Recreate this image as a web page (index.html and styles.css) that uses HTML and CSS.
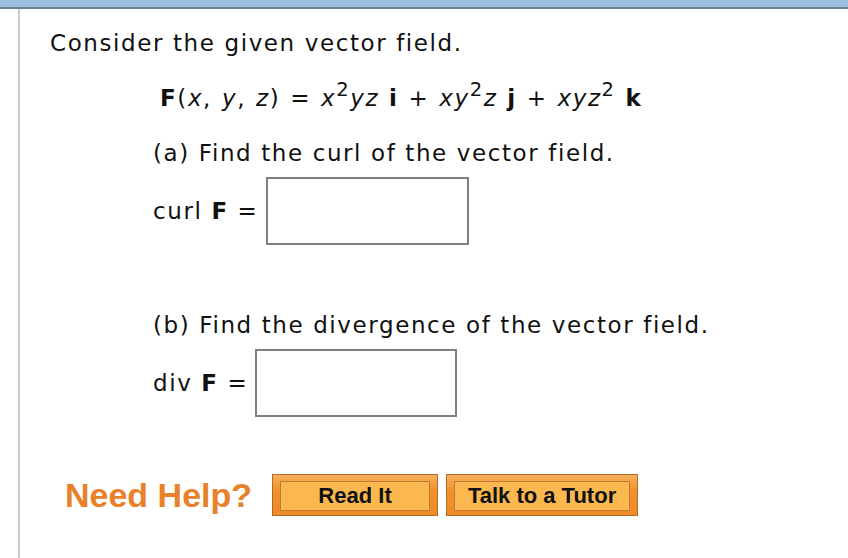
FILE: index.html
```html
<!DOCTYPE html>
<html lang="en">
<head>
  <meta charset="UTF-8">
  <title>Vector Field</title>
  <link rel="stylesheet" href="styles.css">
</head>
<body>
  <div class="top-bar"></div>
  <div class="question">
    <p class="intro">Consider the given vector field.</p>
    <p class="formula"><b>F</b>(<i>x</i>, <i>y</i>, <i>z</i>) = <i>x</i><sup>2</sup><i>yz</i> <b>i</b> + <i>xy</i><sup>2</sup><i>z</i> <b>j</b> + <i>xyz</i><sup>2</sup> <b>k</b></p>

    <p class="part">(a) Find the curl of the vector field.</p>
    <div class="answer-row">
      <span class="label">curl <b>F</b> =</span>
      <span class="answer-box curl-box"></span>
    </div>

    <p class="part part-b">(b) Find the divergence of the vector field.</p>
    <div class="answer-row">
      <span class="label">div <b>F</b> =</span>
      <span class="answer-box div-box"></span>
    </div>

    <div class="help">
      <span class="need-help">Need Help?</span>
      <button class="help-btn read-it"><span>Read It</span></button>
      <button class="help-btn tutor"><span>Talk to a Tutor</span></button>
    </div>
  </div>
</body>
</html>
```

FILE: styles.css
```css
body {
  margin: 0;
  background-color: #fff;
  color: #111;
  font-family: "DejaVu Sans", Verdana, sans-serif;
  font-size: 23px;
  letter-spacing: 1.6px;
}

.top-bar {
  height: 7px;
  background-color: #9dc0e0;
  border-bottom: 2px solid #6f8292;
}

.question {
  margin-left: 18px;
  border-left: 2px solid #cccccc;
  padding: 20px 0 40px 30px;
  min-height: 500px;
}

p {
  margin: 0;
}

.intro {
  line-height: 28px;
}

.formula {
  margin: 27px 0 0 110px;
  line-height: 28px;
  word-spacing: 1px;
}

.formula sup {
  font-size: 0.85em;
  vertical-align: 0.5em;
  line-height: 0;
}

.part {
  margin: 27px 0 0 103px;
  line-height: 28px;
}

.answer-row {
  display: flex;
  align-items: center;
  margin: 10px 0 0 103px;
}

.label {
  margin-right: 7px;
}

.answer-box {
  display: block;
  flex-shrink: 0;
  height: 64px;
  border: 2px solid #808080;
}

.curl-box {
  width: 199px;
}

.div-box {
  width: 198px;
}

.part-b {
  margin-top: 66px;
}

.help {
  display: flex;
  align-items: center;
  margin: 57px 0 0 15px;
  letter-spacing: 0;
}

.need-help {
  font-family: "Liberation Sans", Arial, sans-serif;
  font-weight: bold;
  font-size: 34px;
  color: #e8812a;
  margin-right: 20px;
}

.help-btn {
  height: 42px;
  padding: 6px 7px;
  margin-right: 8px;
  border: 1px solid #b06a2a;
  background: linear-gradient(#f8b05c, #f0902c 40%, #f08a28);
  font-family: "Liberation Sans", Arial, sans-serif;
  font-weight: bold;
  font-size: 22px;
  color: #111;
  cursor: pointer;
}

.help-btn span {
  display: block;
  height: 28px;
  line-height: 28px;
  border: 1px solid #c27a36;
  background-color: #fbb84e;
}

.read-it {
  width: 166px;
}

.tutor {
  width: 192px;
}
```
